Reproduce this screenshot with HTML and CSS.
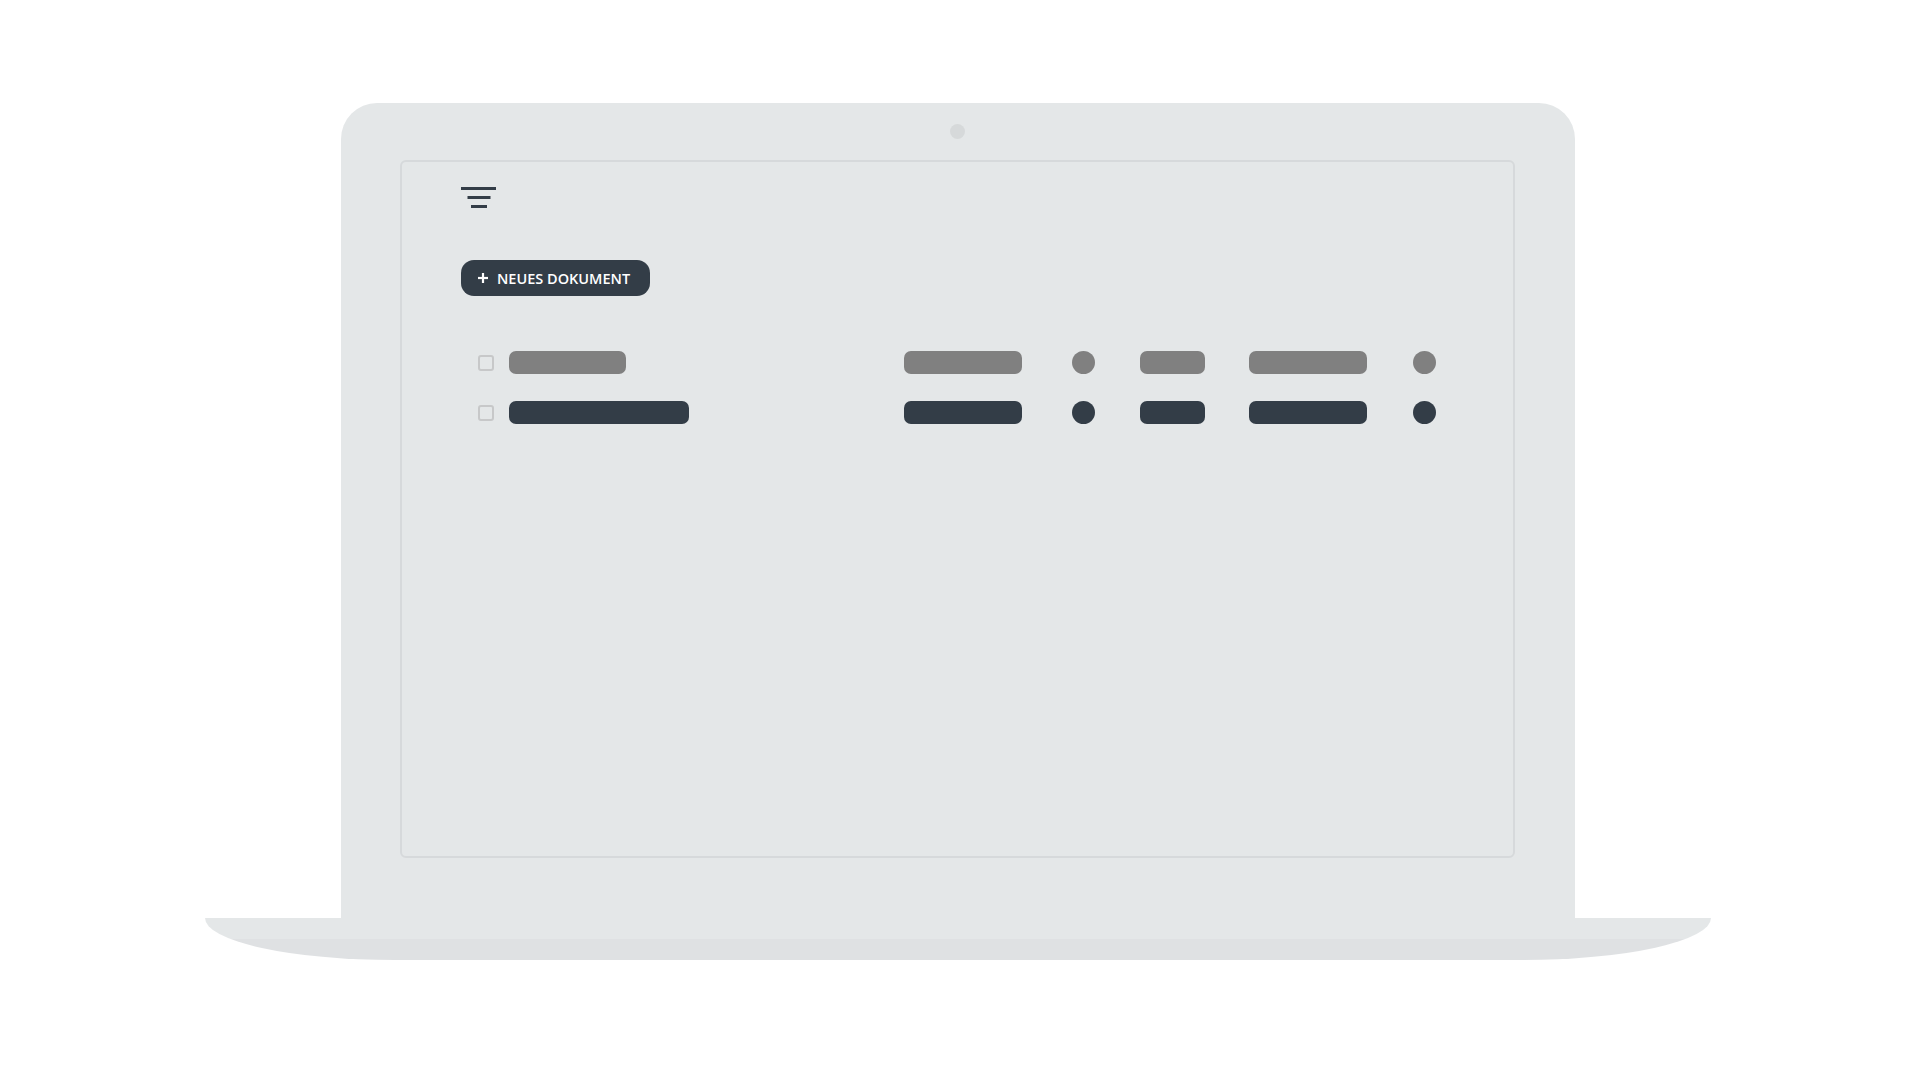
FILE: index.html
```html
<!DOCTYPE html>
<html lang="de">
<head>
<meta charset="utf-8">
<title>Dokumente</title>
<link rel="stylesheet" href="styles.css">
</head>
<body>
<div class="stage">
  <div class="laptop">
    <div class="lid">
      <div class="camera"></div>
      <div class="screen">
        <div class="app">
          <svg class="filter-icon" width="36" height="22" viewBox="0 0 36 22" aria-hidden="true">
            <rect x="0" y="0" width="35" height="3" fill="#333d47"/>
            <rect x="6.5" y="9" width="23" height="3" fill="#333d47"/>
            <rect x="10" y="18" width="16" height="3" fill="#333d47"/>
          </svg>
          <button class="new-doc">
            <svg class="plus" width="10" height="10" viewBox="0 0 10 10" aria-hidden="true">
              <rect x="3.9" y="0" width="2.2" height="10" fill="#ffffff"/>
              <rect x="0" y="3.9" width="10" height="2.2" fill="#ffffff"/>
            </svg>
            <span>NEUES DOKUMENT</span>
          </button>
          <div class="table">
            <div class="row head">
              <span class="check"></span>
              <span class="bar w-name1"></span>
              <span class="bar w-a"></span>
              <span class="dot"></span>
              <span class="bar w-b"></span>
              <span class="bar w-a"></span>
              <span class="dot"></span>
            </div>
            <div class="row item">
              <span class="check"></span>
              <span class="bar w-name2"></span>
              <span class="bar w-a"></span>
              <span class="dot"></span>
              <span class="bar w-b"></span>
              <span class="bar w-a"></span>
              <span class="dot"></span>
            </div>
          </div>
        </div>
      </div>
    </div>
    <div class="base"></div>
  </div>
</div>
</body>
</html>
```

FILE: styles.css
```css
html, body {
  margin: 0;
  padding: 0;
  background: #ffffff;
}

body {
  width: 1920px;
  height: 1080px;
  overflow: hidden;
  font-family: "Open Sans", "Liberation Sans", sans-serif;
}

.stage {
  padding-top: 103px;
  padding-left: 205px;
}

.laptop {
  width: 1506px;
  display: flex;
  flex-direction: column;
  align-items: center;
}

.lid {
  width: 1234px;
  height: 815px;
  box-sizing: border-box;
  background: #e4e7e8;
  border-radius: 36px 36px 0 0;
  padding: 21px 60px 0 59px;
  display: flex;
  flex-direction: column;
  align-items: center;
}

.camera {
  width: 15px;
  height: 15px;
  border-radius: 50%;
  background: #d6d9da;
  margin-bottom: 21px;
}

.screen {
  width: 1115px;
  height: 698px;
  box-sizing: border-box;
  border: 2px solid #d6d9db;
  border-radius: 6px;
  background: #e4e7e8;
}

.app {
  padding: 25px 0 0 59px;
  display: flex;
  flex-direction: column;
  align-items: flex-start;
}

.filter-icon {
  display: block;
}

.new-doc {
  margin-top: 51px;
  height: 36px;
  border: 0;
  border-radius: 13px;
  background: #333d47;
  color: #ffffff;
  padding: 0 20px 0 17px;
  display: flex;
  align-items: center;
  gap: 9px;
  font-family: "Open Sans", "Liberation Sans", sans-serif;
  font-weight: 600;
  font-size: 14.5px;
  letter-spacing: 0;
  cursor: pointer;
}

.plus {
  display: block;
}

.table {
  margin-top: 55px;
  padding-left: 17px;
  display: flex;
  flex-direction: column;
  gap: 27px;
}

.row {
  display: grid;
  grid-template-columns: 31px 395px 168px 68px 109px 164px 23px;
  align-items: center;
  height: 23px;
}

.check {
  width: 16px;
  height: 16px;
  box-sizing: border-box;
  border: 2px solid #c7c8c9;
  border-radius: 3px;
}

.bar {
  height: 23px;
  border-radius: 7px;
}

.dot {
  width: 23px;
  height: 23px;
  border-radius: 50%;
}

.head .bar, .head .dot { background: #808080; }
.item .bar, .item .dot { background: #333d47; }

.w-name1 { width: 117px; }
.w-name2 { width: 180px; }
.w-a { width: 118px; }
.w-b { width: 65px; }

.base {
  width: 1506px;
  height: 42px;
  background: linear-gradient(to bottom, #e4e7e8 0, #e4e7e8 21px, #dfe1e3 21px, #dfe1e3 100%);
  border-radius: 0 0 190px 190px / 0 0 42px 42px;
}
```
